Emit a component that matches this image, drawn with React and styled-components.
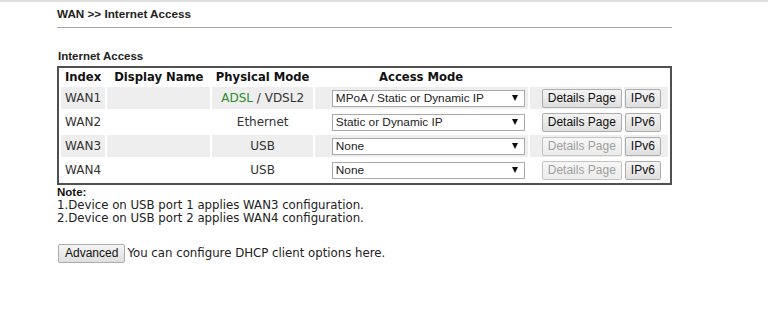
import React from "react";
import styled, { createGlobalStyle } from "styled-components";

const GlobalStyle = createGlobalStyle`
  html, body { margin: 0; padding: 0; background: #fff; }
  body { font-family: "DejaVu Sans", Verdana, sans-serif; color: #333; }
`;

const TopRule = styled.div`
  height: 2px;
  background: #dedede;
`;

const Page = styled.div`
  padding-left: 57px;
  width: 615px;
`;

const Title = styled.h1`
  margin: 5px 0 0;
  padding: 0 0 6px;
  font: bold 11.7px/14px "Liberation Sans", Arial, sans-serif;
  color: #222;
  border-bottom: 1px solid #a8a8a8;
`;

const SectionTitle = styled.h2`
  margin: 21px 0 3px 1px;
  font: bold 11.5px/14px "Liberation Sans", Arial, sans-serif;
  color: #222;
`;

const Table = styled.table`
  width: 615px;
  border: 2px solid #505050;
  border-spacing: 2px;
  border-collapse: separate;
`;

const Th = styled.th`
  height: 15px;
  padding: 0;
  font: bold 11.6px/15px "DejaVu Sans", Verdana, sans-serif;
  color: #111;
  text-align: center;
  white-space: nowrap;
`;

const Row = styled.tr`
  background: ${(p) => (p.$shaded ? "#eeeeee" : "#ffffff")};
`;

const Td = styled.td`
  height: 22px;
  padding: 0;
  font: 12px/14px "DejaVu Sans", Verdana, sans-serif;
  color: #333;
  text-align: ${(p) => p.$align || "center"};
  white-space: nowrap;
  padding-left: ${(p) => p.$pl || 0}px;
`;

const Green = styled.span`
  color: #2e8b2e;
`;

const SelectWrap = styled.div`
  position: relative;
  width: 193px;
  height: 17px;
`;

const Select = styled.select`
  appearance: none;
  -webkit-appearance: none;
  width: 100%;
  height: 100%;
  box-sizing: border-box;
  margin: 0;
  padding: 0 0 0 3px;
  border: 1px solid #a9a9a9;
  border-radius: 0;
  background: #fff;
  font: 11.8px "Liberation Sans", Arial, sans-serif;
  color: #222;
  outline: none;
`;

const Arrow = styled.span`
  position: absolute;
  right: 7px;
  top: 5px;
  width: 0;
  height: 0;
  border-left: 3px solid transparent;
  border-right: 3px solid transparent;
  border-top: 6px solid #111;
  pointer-events: none;
`;

const Button = styled.button`
  height: 19px;
  margin: 0;
  padding: 0 ${(p) => p.$px ?? 5}px;
  box-sizing: border-box;
  border: 1px solid #acacac;
  border-radius: 2px;
  background: linear-gradient(#f4f4f4, #dfdfdf);
  font: 12px/15px "Liberation Sans", Arial, sans-serif;
  color: #111;
  cursor: pointer;
  &:disabled {
    color: #a0a0a0;
    border-color: #c4c4c4;
    background: linear-gradient(#f6f6f6, #ececec);
  }
`;

const Note = styled.div`
  margin-top: 1px;
`;

const NoteTitle = styled.div`
  font: bold 11.5px/13px "Liberation Sans", Arial, sans-serif;
  color: #111;
`;

const NoteLine = styled.div`
  font: 11.75px/13px "DejaVu Sans", Verdana, sans-serif;
  color: #222;
`;

const AdvancedRow = styled.div`
  margin-top: 19px;
  display: flex;
  align-items: center;
  gap: 2px;
  padding-left: 1px;
`;

const AdvancedText = styled.span`
  font: 11.75px/13px "DejaVu Sans", Verdana, sans-serif;
  color: #222;
`;

const rows = [
  { idx: "WAN1", phys: "adsl", mode: "MPoA / Static or Dynamic IP", details: true },
  { idx: "WAN2", phys: "Ethernet", mode: "Static or Dynamic IP", details: true },
  { idx: "WAN3", phys: "USB", mode: "None", details: false },
  { idx: "WAN4", phys: "USB", mode: "None", details: false },
];

export default function App() {
  return (
    <>
      <GlobalStyle />
      <TopRule />
      <Page>
        <Title>WAN &gt;&gt; Internet Access</Title>
        <SectionTitle>Internet Access</SectionTitle>
        <Table>
          <colgroup>
            <col style={{ width: 44 }} />
            <col style={{ width: 103 }} />
            <col style={{ width: 100 }} />
            <col style={{ width: 212 }} />
            <col style={{ width: 92 }} />
            <col style={{ width: 44 }} />
          </colgroup>
          <thead>
            <tr>
              <Th>Index</Th>
              <Th>Display Name</Th>
              <Th>Physical Mode</Th>
              <Th>Access Mode</Th>
              <Th />
              <Th />
            </tr>
          </thead>
          <tbody>
            {rows.map((r, i) => (
              <Row key={r.idx} $shaded={i % 2 === 0}>
                <Td>{r.idx}</Td>
                <Td />
                <Td>
                  {r.phys === "adsl" ? (
                    <>
                      <Green>ADSL</Green> / VDSL2
                    </>
                  ) : (
                    r.phys
                  )}
                </Td>
                <Td $align="left" $pl={17}>
                  <SelectWrap>
                    <Select defaultValue={r.mode}>
                      <option>{r.mode}</option>
                    </Select>
                    <Arrow />
                  </SelectWrap>
                </Td>
                <Td $align="right">
                  <Button disabled={!r.details}>Details Page</Button>
                </Td>
                <Td $align="left" $pl={1}>
                  <Button>IPv6</Button>
                </Td>
              </Row>
            ))}
          </tbody>
        </Table>
        <Note>
          <NoteTitle>Note:</NoteTitle>
          <NoteLine>1.Device on USB port 1 applies WAN3 configuration.</NoteLine>
          <NoteLine>2.Device on USB port 2 applies WAN4 configuration.</NoteLine>
        </Note>
        <AdvancedRow>
          <Button $px={6}>Advanced</Button>
          <AdvancedText>You can configure DHCP client options here.</AdvancedText>
        </AdvancedRow>
      </Page>
    </>
  );
}
